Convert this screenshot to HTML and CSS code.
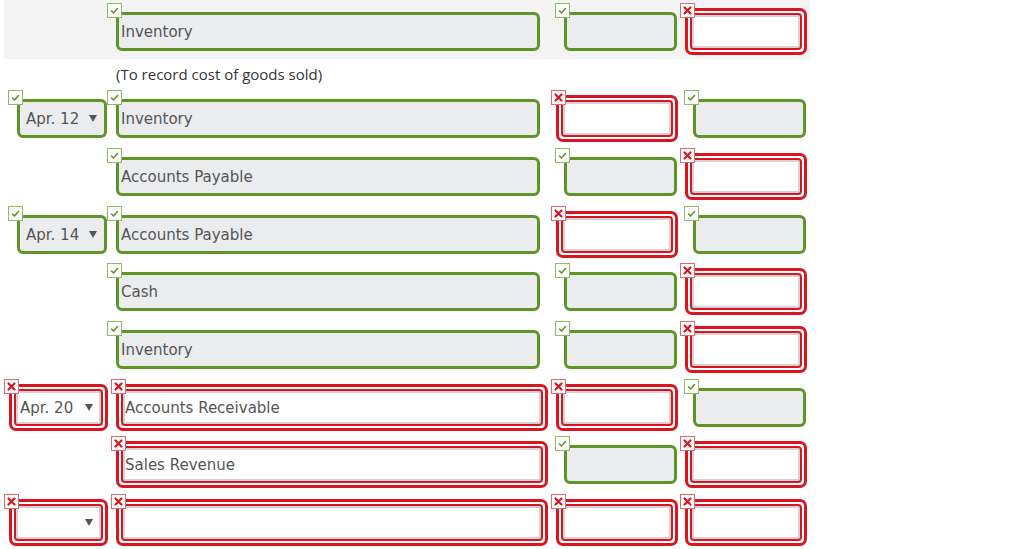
FILE: index.html
```html
<!DOCTYPE html>
<html>
<head>
<meta charset="utf-8">
<link rel="stylesheet" href="styles.css">
</head>
<body>
<div class="sheet">
  <div class="band">
    <div class="row">
      <div class="slot s-date"></div>
      <div class="slot s-acct">
        <div class="field ok w-acct"><span class="badge b-ok"><svg viewBox="0 0 13 13"><polyline points="3.5,7 5.5,9 9.5,4.5"/></svg></span><span class="txt">Inventory</span></div>
      </div>
      <div class="slot s-amt">
        <div class="field ok w-amt"><span class="badge b-ok"><svg viewBox="0 0 13 13"><polyline points="3.5,7 5.5,9 9.5,4.5"/></svg></span></div>
      </div>
      <div class="slot s-amt">
        <div class="field bad w-amt-r"><span class="badge b-bad"><svg viewBox="0 0 13 13"><path d="M3.5 3.5 L9.5 9.5 M9.5 3.5 L3.5 9.5"/></svg></span><div class="inner"></div></div>
      </div>
    </div>
  </div>

  <div class="memo">(To record cost of goods sold)</div>

  <div class="row">
    <div class="slot s-date">
      <div class="field ok w-date"><span class="badge b-ok"><svg viewBox="0 0 13 13"><polyline points="3.5,7 5.5,9 9.5,4.5"/></svg></span><span class="dtxt">Apr. 12</span><svg class="arrow" viewBox="0 0 8 7"><polygon points="0,0 8,0 4,7"/></svg></div>
    </div>
    <div class="slot s-acct">
      <div class="field ok w-acct"><span class="badge b-ok"><svg viewBox="0 0 13 13"><polyline points="3.5,7 5.5,9 9.5,4.5"/></svg></span><span class="txt">Inventory</span></div>
    </div>
    <div class="slot s-amt">
      <div class="field bad w-amt-r"><span class="badge b-bad"><svg viewBox="0 0 13 13"><path d="M3.5 3.5 L9.5 9.5 M9.5 3.5 L3.5 9.5"/></svg></span><div class="inner"></div></div>
    </div>
    <div class="slot s-amt">
      <div class="field ok w-amt"><span class="badge b-ok"><svg viewBox="0 0 13 13"><polyline points="3.5,7 5.5,9 9.5,4.5"/></svg></span></div>
    </div>
  </div>

  <div class="row">
    <div class="slot s-date"></div>
    <div class="slot s-acct">
      <div class="field ok w-acct"><span class="badge b-ok"><svg viewBox="0 0 13 13"><polyline points="3.5,7 5.5,9 9.5,4.5"/></svg></span><span class="txt">Accounts Payable</span></div>
    </div>
    <div class="slot s-amt">
      <div class="field ok w-amt"><span class="badge b-ok"><svg viewBox="0 0 13 13"><polyline points="3.5,7 5.5,9 9.5,4.5"/></svg></span></div>
    </div>
    <div class="slot s-amt">
      <div class="field bad w-amt-r"><span class="badge b-bad"><svg viewBox="0 0 13 13"><path d="M3.5 3.5 L9.5 9.5 M9.5 3.5 L3.5 9.5"/></svg></span><div class="inner"></div></div>
    </div>
  </div>

  <div class="row">
    <div class="slot s-date">
      <div class="field ok w-date"><span class="badge b-ok"><svg viewBox="0 0 13 13"><polyline points="3.5,7 5.5,9 9.5,4.5"/></svg></span><span class="dtxt">Apr. 14</span><svg class="arrow" viewBox="0 0 8 7"><polygon points="0,0 8,0 4,7"/></svg></div>
    </div>
    <div class="slot s-acct">
      <div class="field ok w-acct"><span class="badge b-ok"><svg viewBox="0 0 13 13"><polyline points="3.5,7 5.5,9 9.5,4.5"/></svg></span><span class="txt">Accounts Payable</span></div>
    </div>
    <div class="slot s-amt">
      <div class="field bad w-amt-r"><span class="badge b-bad"><svg viewBox="0 0 13 13"><path d="M3.5 3.5 L9.5 9.5 M9.5 3.5 L3.5 9.5"/></svg></span><div class="inner"></div></div>
    </div>
    <div class="slot s-amt">
      <div class="field ok w-amt"><span class="badge b-ok"><svg viewBox="0 0 13 13"><polyline points="3.5,7 5.5,9 9.5,4.5"/></svg></span></div>
    </div>
  </div>

  <div class="row">
    <div class="slot s-date"></div>
    <div class="slot s-acct">
      <div class="field ok w-acct"><span class="badge b-ok"><svg viewBox="0 0 13 13"><polyline points="3.5,7 5.5,9 9.5,4.5"/></svg></span><span class="txt">Cash</span></div>
    </div>
    <div class="slot s-amt">
      <div class="field ok w-amt"><span class="badge b-ok"><svg viewBox="0 0 13 13"><polyline points="3.5,7 5.5,9 9.5,4.5"/></svg></span></div>
    </div>
    <div class="slot s-amt">
      <div class="field bad w-amt-r"><span class="badge b-bad"><svg viewBox="0 0 13 13"><path d="M3.5 3.5 L9.5 9.5 M9.5 3.5 L3.5 9.5"/></svg></span><div class="inner"></div></div>
    </div>
  </div>

  <div class="row">
    <div class="slot s-date"></div>
    <div class="slot s-acct">
      <div class="field ok w-acct"><span class="badge b-ok"><svg viewBox="0 0 13 13"><polyline points="3.5,7 5.5,9 9.5,4.5"/></svg></span><span class="txt">Inventory</span></div>
    </div>
    <div class="slot s-amt">
      <div class="field ok w-amt"><span class="badge b-ok"><svg viewBox="0 0 13 13"><polyline points="3.5,7 5.5,9 9.5,4.5"/></svg></span></div>
    </div>
    <div class="slot s-amt">
      <div class="field bad w-amt-r"><span class="badge b-bad"><svg viewBox="0 0 13 13"><path d="M3.5 3.5 L9.5 9.5 M9.5 3.5 L3.5 9.5"/></svg></span><div class="inner"></div></div>
    </div>
  </div>

  <div class="row">
    <div class="slot s-date">
      <div class="field bad w-date-r"><span class="badge b-bad"><svg viewBox="0 0 13 13"><path d="M3.5 3.5 L9.5 9.5 M9.5 3.5 L3.5 9.5"/></svg></span><div class="inner inner-date"><span class="dtxt">Apr. 20</span><svg class="arrow" viewBox="0 0 8 7"><polygon points="0,0 8,0 4,7"/></svg></div></div>
    </div>
    <div class="slot s-acct">
      <div class="field bad w-acct-r"><span class="badge b-bad"><svg viewBox="0 0 13 13"><path d="M3.5 3.5 L9.5 9.5 M9.5 3.5 L3.5 9.5"/></svg></span><div class="inner"><span class="txt">Accounts Receivable</span></div></div>
    </div>
    <div class="slot s-amt">
      <div class="field bad w-amt-r"><span class="badge b-bad"><svg viewBox="0 0 13 13"><path d="M3.5 3.5 L9.5 9.5 M9.5 3.5 L3.5 9.5"/></svg></span><div class="inner"></div></div>
    </div>
    <div class="slot s-amt">
      <div class="field ok w-amt"><span class="badge b-ok"><svg viewBox="0 0 13 13"><polyline points="3.5,7 5.5,9 9.5,4.5"/></svg></span></div>
    </div>
  </div>

  <div class="row">
    <div class="slot s-date"></div>
    <div class="slot s-acct">
      <div class="field bad w-acct-r"><span class="badge b-bad"><svg viewBox="0 0 13 13"><path d="M3.5 3.5 L9.5 9.5 M9.5 3.5 L3.5 9.5"/></svg></span><div class="inner"><span class="txt">Sales Revenue</span></div></div>
    </div>
    <div class="slot s-amt">
      <div class="field ok w-amt"><span class="badge b-ok"><svg viewBox="0 0 13 13"><polyline points="3.5,7 5.5,9 9.5,4.5"/></svg></span></div>
    </div>
    <div class="slot s-amt">
      <div class="field bad w-amt-r"><span class="badge b-bad"><svg viewBox="0 0 13 13"><path d="M3.5 3.5 L9.5 9.5 M9.5 3.5 L3.5 9.5"/></svg></span><div class="inner"></div></div>
    </div>
  </div>

  <div class="row">
    <div class="slot s-date">
      <div class="field bad w-date-r"><span class="badge b-bad"><svg viewBox="0 0 13 13"><path d="M3.5 3.5 L9.5 9.5 M9.5 3.5 L3.5 9.5"/></svg></span><div class="inner inner-date"><span class="dtxt"></span><svg class="arrow" viewBox="0 0 8 7"><polygon points="0,0 8,0 4,7"/></svg></div></div>
    </div>
    <div class="slot s-acct">
      <div class="field bad w-acct-r"><span class="badge b-bad"><svg viewBox="0 0 13 13"><path d="M3.5 3.5 L9.5 9.5 M9.5 3.5 L3.5 9.5"/></svg></span><div class="inner"></div></div>
    </div>
    <div class="slot s-amt">
      <div class="field bad w-amt-r"><span class="badge b-bad"><svg viewBox="0 0 13 13"><path d="M3.5 3.5 L9.5 9.5 M9.5 3.5 L3.5 9.5"/></svg></span><div class="inner"></div></div>
    </div>
    <div class="slot s-amt">
      <div class="field bad w-amt-r"><span class="badge b-bad"><svg viewBox="0 0 13 13"><path d="M3.5 3.5 L9.5 9.5 M9.5 3.5 L3.5 9.5"/></svg></span><div class="inner"></div></div>
    </div>
  </div>
</div>
</body>
</html>
```

FILE: styles.css
```css
html, body {
  margin: 0;
  padding: 0;
  background: #ffffff;
}

body {
  font-family: "DejaVu Sans", Verdana, sans-serif;
  color: #555555;
}

.sheet {
  margin-left: 4px;
  width: 806px;
}

.band {
  background: #f3f3f3;
  height: 59px;
  box-sizing: border-box;
  padding-top: 4px;
  display: flex;
  align-items: center;
}

.band .row {
  height: auto;
}

.memo {
  height: 31px;
  line-height: 30px;
  padding-left: 112px;
  font-family: "Open Sans", "Liberation Sans", sans-serif;
  font-size: 15px;
  color: #333333;
}

.row {
  display: flex;
  align-items: center;
  height: 57.7px;
}

.slot {
  flex: none;
  display: flex;
  align-items: center;
}

.s-date { width: 104px; }
.s-acct { width: 444px; }
.s-amt  { width: 129px; }

.field {
  position: relative;
  box-sizing: border-box;
  flex: none;
}

.field.ok {
  height: 39px;
  border: 3px solid #5f9426;
  border-radius: 6px;
  background: #ebecee;
  display: flex;
  align-items: center;
}

.field.bad {
  height: 47px;
  border: 3px solid #d9161f;
  border-radius: 7px;
  padding: 2px;
  background: #ffffff;
}

.field.bad .inner {
  height: 100%;
  box-sizing: border-box;
  border: 2px solid #d9161f;
  border-radius: 4px;
  box-shadow: inset 0 0 0 2px #d3d3d3;
  background: #ffffff;
  display: flex;
  align-items: center;
}

/* widths / offsets */
.w-date   { width: 90px;  margin-left: 13px; justify-content: space-between; padding: 0 7px 0 6px; }
.w-date-r { width: 99px;  margin-left: 5px; }
.w-acct   { width: 424px; margin-left: 8px; }
.w-acct-r { width: 432px; margin-left: 8px; }
.w-amt    { width: 113px; margin-left: 12px; }
.w-amt-r  { width: 122px; margin-left: 4px; }

.inner-date {
  justify-content: space-between;
  padding: 0 8px 0 4px;
}

.txt {
  font-size: 15px;
  padding-left: 2px;
  padding-top: 1px;
  white-space: nowrap;
}

.dtxt {
  font-size: 15px;
  padding-top: 1px;
  white-space: nowrap;
}

.arrow {
  width: 8px;
  height: 7px;
  fill: #555555;
  flex: none;
}

/* badges */
.badge {
  position: absolute;
  width: 15px;
  height: 15px;
  box-sizing: border-box;
  background: #ffffff;
  display: flex;
  align-items: center;
  justify-content: center;
}

.badge svg {
  width: 13px;
  height: 13px;
  fill: none;
}

.ok > .badge {
  top: -12px;
  left: -12px;
}

.bad > .badge {
  top: -8px;
  left: -8px;
}

.b-ok {
  border: 1px solid #93b866;
}

.b-ok svg {
  stroke: #5f9426;
  stroke-width: 1.6;
  stroke-linecap: round;
  stroke-linejoin: round;
}

.b-bad {
  border: 1px solid #e2696d;
}

.b-bad svg {
  stroke: #d9161f;
  stroke-width: 2.2;
  stroke-linecap: round;
}
```
